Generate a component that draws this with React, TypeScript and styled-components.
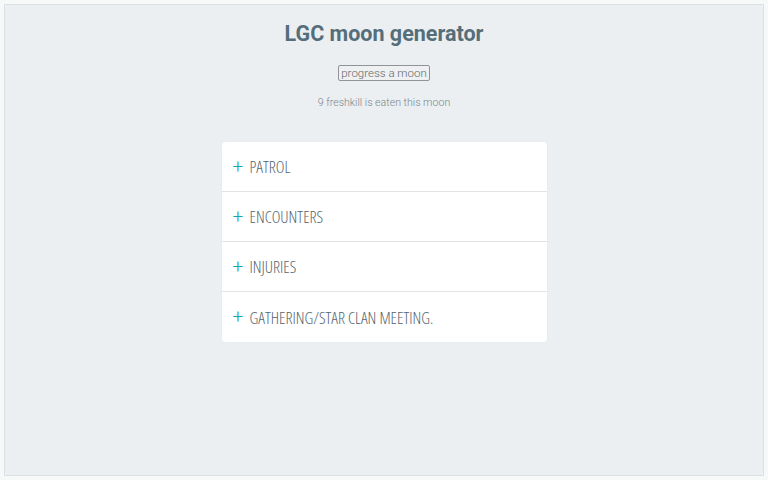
import React from 'react';
import styled, { createGlobalStyle } from 'styled-components';

const GlobalStyle = createGlobalStyle`
  html, body {
    margin: 0;
    padding: 0;
    background: #f7f8f8;
  }
  body {
    padding: 4px;
    font-family: Roboto, "Liberation Sans", sans-serif;
  }
`;

const Frame = styled.div`
  box-sizing: border-box;
  height: 472px;
  background: #eceff1;
  border: 1px solid #dde1e3;
  display: flex;
  flex-direction: column;
  align-items: center;
`;

const Title = styled.h1`
  margin: 16px 0 0;
  font-size: 21.5px;
  font-weight: 700;
  color: #546e7a;
  line-height: 26px;
`;

const ProgressButton = styled.button`
  margin-top: 18px;
  font-family: Roboto, sans-serif;
  font-weight: 300;
  font-size: 11.5px;
  color: #616b70;
  background: #eef0f1;
  border: 1px solid #8f9497;
  border-radius: 2px;
  padding: 1px 2px;
  line-height: 12px;
`;

const Note = styled.p`
  margin: 15px 0 0;
  font-size: 10.6px;
  font-weight: 300;
  color: #78868d;
`;

const Card = styled.div`
  margin-top: 33px;
  width: 325px;
  background: #fff;
  border-radius: 3px;
  box-shadow: 0 0 1px rgba(0, 0, 0, 0.12);
`;

const Row = styled.div<{ $last?: boolean }>`
  height: 50px;
  box-sizing: border-box;
  display: flex;
  align-items: center;
  padding-left: 11px;
  border-bottom: ${p => (p.$last ? 'none' : '1px solid #dfe3e5')};
`;

const Plus = styled.span`
  color: #1aa3b0;
  font-family: Roboto, sans-serif;
  font-weight: 300;
  font-size: 19px;
  width: 17px;
  margin-top: -1px;
`;

const Label = styled.span`
  font-family: "Open Sans", sans-serif;
  font-stretch: 75%;
  font-weight: 300;
  font-size: 16.5px;
  color: #55656d;
`;

const sections = ['PATROL', 'ENCOUNTERS', 'INJURIES', 'GATHERING/STAR CLAN MEETING.'];

const App: React.FC = () => (
  <>
    <GlobalStyle />
    <Frame>
      <Title>LGC moon generator</Title>
      <ProgressButton>progress a moon</ProgressButton>
      <Note>9 freshkill is eaten this moon</Note>
      <Card>
        {sections.map((s, i) => (
          <Row key={s} $last={i === sections.length - 1}>
            <Plus>+</Plus>
            <Label>{s}</Label>
          </Row>
        ))}
      </Card>
    </Frame>
  </>
);

export default App;
